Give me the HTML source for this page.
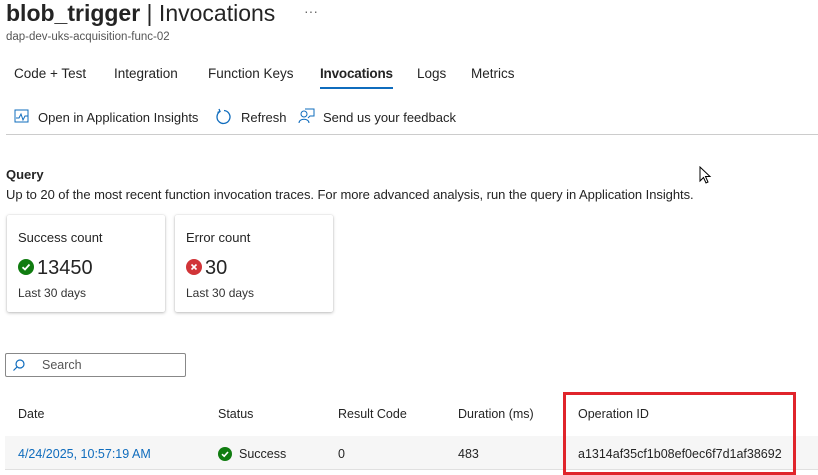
<!DOCTYPE html>
<html><head><style>
body{margin:0;width:818px;height:475px;background:#fff;font-family:"Liberation Sans",sans-serif;color:#242424;position:relative;overflow:hidden}
.a{position:absolute;white-space:nowrap}
.card{position:absolute;top:215px;width:158px;height:97px;background:#fff;box-shadow:0 1px 3px rgba(0,0,0,.25),0 0 1px rgba(0,0,0,.2);border-radius:2px}
.card .t{position:absolute;left:11px;top:15px;font-size:13px;color:#242424}
.card .n{position:absolute;left:30px;top:42px;font-size:20px}
.card .s{position:absolute;left:11px;top:71px;font-size:12px;color:#333}
.card .ic{position:absolute;left:11px;top:44px;width:16px;height:16px;border-radius:50%}
.th{font-size:12.5px;top:407px}
.td{font-size:12.5px;top:447px}
</style></head><body>
<div class="a" style="left:6px;top:0px;font-size:23px;"><b style="font-weight:700">blob_trigger</b> | Invocations</div>
<div class="a" style="left:304px;top:3px;font-size:14px;color:#666">···</div>
<div class="a" style="left:6px;top:31px;font-size:11.5px;color:#555">dap-dev-uks-acquisition-func-02</div>
<div class="a" style="left:14px;top:66px;font-size:13.5px">Code + Test</div>
<div class="a" style="left:114px;top:66px;font-size:13.5px">Integration</div>
<div class="a" style="left:208px;top:66px;font-size:13.5px">Function Keys</div>
<div class="a" style="left:320px;top:66px;font-size:13.5px;font-weight:700;letter-spacing:-0.2px">Invocations</div>
<div class="a" style="left:320px;top:87px;width:73px;height:2px;background:#0f6cbd"></div>
<div class="a" style="left:417px;top:66px;font-size:13.5px">Logs</div>
<div class="a" style="left:471px;top:66px;font-size:13.5px">Metrics</div>
<svg class="a" style="left:14px;top:109px" width="16" height="15" viewBox="0 0 16 15"><rect x="1" y="1" width="13" height="12" fill="none" stroke="#0f6cbd"/><path d="M2 9 L5 9 L7 5 L9 11 L11 7 L14 7" fill="none" stroke="#0f6cbd"/></svg>
<div class="a" style="left:38px;top:110px;font-size:13px">Open in Application Insights</div>
<svg class="a" style="left:215px;top:108px" width="18" height="18" viewBox="0 0 18 18"><path d="M5 3.5 A6.5 6.5 0 1 0 9 2.5" fill="none" stroke="#0f6cbd" stroke-width="1.3"/><path d="M4 1 L5 3.5 L2.5 4.5" fill="none" stroke="#0f6cbd" stroke-width="1.3"/></svg>
<div class="a" style="left:241px;top:110px;font-size:13px">Refresh</div>
<svg class="a" style="left:298px;top:108px" width="18" height="17" viewBox="0 0 18 17"><circle cx="6" cy="6" r="3" fill="none" stroke="#0f6cbd"/><path d="M1 15 C1 10 11 10 11 15" fill="none" stroke="#0f6cbd"/><path d="M7 1 H16 V8 H12 L10 10" fill="none" stroke="#0f6cbd"/></svg>
<div class="a" style="left:323px;top:110px;font-size:13px">Send us your feedback</div>
<div class="a" style="left:6px;top:134px;width:812px;height:1px;background:#ccc"></div>
<div class="a" style="left:6px;top:167px;font-size:13px;font-weight:700">Query</div>
<div class="a" style="left:6px;top:187px;font-size:13px;letter-spacing:-0.05px">Up to 20 of the most recent function invocation traces. For more advanced analysis, run the query in Application Insights.</div>
<div class="card" style="left:7px"><div class="t">Success count</div><div class="ic" style="background:#107c10"><svg width="16" height="16"><path d="M4.5 8.2 L7 10.5 L11.5 5.5" fill="none" stroke="#fff" stroke-width="1.8"/></svg></div><div class="n">13450</div><div class="s">Last 30 days</div></div>
<div class="card" style="left:175px"><div class="t">Error count</div><div class="ic" style="background:#d13438"><svg width="16" height="16"><path d="M5.5 5.5 L10.5 10.5 M10.5 5.5 L5.5 10.5" stroke="#fff" stroke-width="1.6"/></svg></div><div class="n">30</div><div class="s">Last 30 days</div></div>
<div class="a" style="left:5px;top:353px;width:179px;height:22px;border:1px solid #888;border-radius:2px"></div>
<svg class="a" style="left:12px;top:358px" width="14" height="14" viewBox="0 0 14 14"><circle cx="8" cy="6" r="4" fill="none" stroke="#0f6cbd" stroke-width="1.2"/><path d="M5 9 L1.5 12.5" stroke="#0f6cbd" stroke-width="1.2"/></svg>
<div class="a" style="left:42px;top:358px;font-size:12.5px;color:#555">Search</div>
<div class="a th" style="left:18px">Date</div>
<div class="a th" style="left:218px">Status</div>
<div class="a th" style="left:338px">Result Code</div>
<div class="a th" style="left:458px">Duration (ms)</div>
<div class="a th" style="left:578px">Operation ID</div>
<div class="a" style="left:5px;top:436px;width:813px;height:33px;background:#f6f6f6;border-bottom:1px solid #e0e0e0"></div>
<div class="a td" style="left:18px;color:#0f6cbd">4/24/2025, 10:57:19 AM</div>
<div class="a" style="left:218px;top:447px;width:14px;height:14px;border-radius:50%;background:#107c10"><svg width="14" height="14"><path d="M4 7.2 L6.2 9.2 L10 5" fill="none" stroke="#fff" stroke-width="1.6"/></svg></div>
<div class="a td" style="left:239px">Success</div>
<div class="a td" style="left:338px">0</div>
<div class="a td" style="left:458px">483</div>
<div class="a td" style="left:578px">a1314af35cf1b08ef0ec6f7d1af38692</div>
<div class="a" style="left:563px;top:392px;width:227px;height:77px;border:3px solid #e0242b"></div>
<svg class="a" style="left:699px;top:166px" width="14" height="20" viewBox="0 0 14 20"><path d="M1 1 L1 15 L4.5 11.5 L7 17 L9 16 L6.5 10.5 L11 10.5 Z" fill="#fff" stroke="#000"/></svg>
</body></html>
